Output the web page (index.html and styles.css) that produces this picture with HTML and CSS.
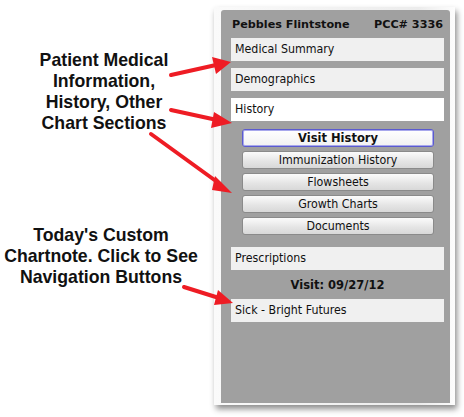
FILE: index.html
```html
<!DOCTYPE html>
<html>
<head>
<meta charset="utf-8">
<link rel="stylesheet" href="styles.css">
</head>
<body>
<div class="page">
  <div class="notes">
    <p class="note note-top">Patient Medical<br>Information,<br>History, Other<br>Chart Sections</p>
    <p class="note note-bottom">Today's Custom<br>Chartnote. Click to See<br>Navigation Buttons</p>
  </div>
  <div class="frame">
    <div class="panel">
      <div class="header"><span>Pebbles Flintstone</span><span>PCC# 3336</span></div>
      <div class="row">Medical Summary</div>
      <div class="row">Demographics</div>
      <div class="row row-active">History</div>
      <div class="buttons">
        <div class="btn btn-selected">Visit History</div>
        <div class="btn">Immunization History</div>
        <div class="btn">Flowsheets</div>
        <div class="btn">Growth Charts</div>
        <div class="btn">Documents</div>
      </div>
      <div class="row">Prescriptions</div>
      <div class="visit">Visit: 09/27/12</div>
      <div class="row">Sick - Bright Futures</div>
    </div>
  </div>
</div>
<svg class="arrows" width="464" height="417" viewBox="0 0 464 417">
  <g stroke="#ee1c24" stroke-width="4" stroke-linecap="round" fill="#ee1c24">
    <line x1="171" y1="75" x2="216" y2="65"/>
    <polygon points="231,62 212,57 216,74" stroke="none"/>
    <line x1="171" y1="110" x2="217" y2="120"/>
    <polygon points="232,123 214,112 211,128" stroke="none"/>
    <line x1="151" y1="134" x2="220" y2="184"/>
    <polygon points="232,193 215,176 212,190" stroke="none"/>
    <line x1="184" y1="287" x2="219" y2="298"/>
    <polygon points="233,303 218,290 214,305" stroke="none"/>
  </g>
</svg>
</body>
</html>
```
FILE: styles.css
```css
html, body {
  margin: 0;
  padding: 0;
  background: #fff;
}
.page {
  display: flex;
  width: 464px;
  height: 417px;
}
.notes {
  width: 214px;
  display: flex;
  flex-direction: column;
}
.note {
  margin: 0;
  font-family: "Liberation Sans", Arial, sans-serif;
  font-weight: bold;
  font-size: 17.7px;
  line-height: 21px;
  color: #111;
  text-align: center;
}
.note-top {
  padding-top: 50px;
  width: 208px;
}
.note-bottom {
  padding-top: 91px;
  width: 202px;
}
.frame {
  margin-top: 7px;
  width: 241px;
  height: 398px;
  box-sizing: border-box;
  padding: 3px 5px 2px 7px;
  background: linear-gradient(90deg, #fafafa, #ececec 85%, #fdfdfd);
  box-shadow: 2px 4px 6px rgba(0,0,0,0.45);
}
.panel {
  height: 100%;
  background: #a0a0a0;
  border-radius: 3px 3px 0 0;
  padding: 0 6px 0 10px;
  display: flex;
  flex-direction: column;
  font-family: "DejaVu Sans Condensed", "DejaVu Sans", Verdana, sans-serif;
  font-size: 12.3px;
  color: #111;
}
.header {
  height: 28px;
  display: flex;
  justify-content: space-between;
  align-items: center;
  font-family: "DejaVu Sans", Verdana, sans-serif;
  font-weight: bold;
  font-size: 11.2px;
  padding: 1px 1px 0;
  box-sizing: border-box;
}
.row {
  height: 23px;
  line-height: 23px;
  background: #f0f0f0;
  padding-left: 4px;
  margin-bottom: 7px;
}
.row-active {
  background: #fff;
  margin-bottom: 8px;
}
.buttons {
  display: flex;
  flex-direction: column;
  gap: 4px;
  padding: 0 10px 0 11px;
  margin-bottom: 12px;
}
.btn {
  height: 18px;
  box-sizing: border-box;
  line-height: 16px;
  text-align: center;
  border: 1px solid #8a8a8a;
  border-radius: 3px;
  background: linear-gradient(#fbfbfb, #e4e4e4 60%, #d8d8d8);
}
.btn-selected {
  border-color: #5b5bd0;
  font-family: "DejaVu Sans", Verdana, sans-serif;
  font-size: 11.5px;
  font-weight: bold;
  background: linear-gradient(#ffffff, #f2f2f2);
  box-shadow: inset 0 0 0 1px #a8a8ec;
}
.visit {
  height: 29px;
  line-height: 30px;
  text-align: center;
  font-family: "DejaVu Sans", Verdana, sans-serif;
  font-weight: bold;
  font-size: 11.5px;
  margin-top: -7px;
}
.arrows {
  position: absolute;
  left: 0;
  top: 0;
  pointer-events: none;
}
```
